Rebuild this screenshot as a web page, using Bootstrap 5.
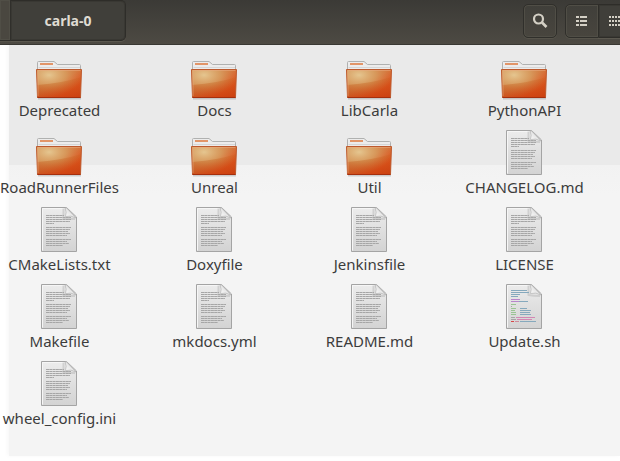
<!DOCTYPE html>
<html lang="en">
<head>
<meta charset="utf-8">
<meta name="viewport" content="width=device-width, initial-scale=1">
<title>carla-0</title>
<link href="https://cdn.jsdelivr.net/npm/bootstrap@5.3.0/dist/css/bootstrap.min.css" rel="stylesheet">
<style>
body { background: #fff; color: #3c3c3c; font: 15px/20px "Noto Sans", "Open Sans", sans-serif; overflow-x: hidden; }
.toolbar { height: 45px; background: linear-gradient(#3b3a36, #4d4a43); border-bottom: 1px solid #393833; overflow: hidden; }
.tool { border: 1px solid #302f2b; border-radius: 5px; background: linear-gradient(#403f3a, #48453e); box-shadow: inset 0 0 0 1px #504e46, 0 1px 0 #56534a; color: #d4d0c5; padding: 0; }
.tool:hover, .tool.active:hover { color: #fff; border-color: #302f2b; background: #4a4740; }
.tool.active { background: #403f3a; border-color: #2e2d29; box-shadow: inset 0 0 0 1px #393833, 0 1px 0 #5b584f; color: #d4d0c5; }
.square { width: 34px; height: 34px; }
.tool svg { display: block; margin: auto; }
.parent { width: 11px; height: 41px; border-left: 0; border-top: 0; border-radius: 0; }
.crumb, .tool.active.crumb { width: 115px; height: 41px; border-radius: 0 5px 5px 0; border-left: 0; color: #dfdbd2; font-size: 14px; font-weight: 700; }
.views { margin-right: -12px; }
.pane { margin: 0 0 4px 9px; background: linear-gradient(#eaeaea 120px, #f2f2f2 120px, #f4f4f4 150px); box-shadow: -2px 0 4px #f8f8f8; }
.files { margin: 0 18px 0 -27px; padding: 8px 0 28px; row-gap: 10px; }
.item { color: inherit; }
.item svg { width: 48px; height: 47px; display: block; margin: 0 auto; }
.item span { display: block; white-space: nowrap; }
</style>
<script defer src="https://cdn.jsdelivr.net/npm/bootstrap@5.3.0/dist/js/bootstrap.bundle.min.js"></script>
</head>
<body>
<svg width="0" height="0" class="position-absolute" aria-hidden="true">
  <defs>
    <linearGradient id="gFolder" x1="0" y1="0" x2="1" y2="1"><stop offset="0" stop-color="#d39a63"/><stop offset=".45" stop-color="#d27a3f"/><stop offset=".75" stop-color="#e04c1a"/><stop offset="1" stop-color="#d03f12"/></linearGradient>
    <radialGradient id="gGlow" cx=".28" cy=".2" r=".75"><stop offset="0" stop-color="#e5c690"/><stop offset=".5" stop-color="#d9a163" stop-opacity=".75"/><stop offset="1" stop-color="#dc7a45" stop-opacity="0"/></radialGradient>
    <linearGradient id="gShade" x1="0" y1="0" x2="0" y2="1"><stop offset="0" stop-color="#c2651b" stop-opacity=".2"/><stop offset="1" stop-color="#c8400f" stop-opacity=".6"/></linearGradient>
    <linearGradient id="gPaper" x1="0" y1="0" x2="0" y2="1"><stop offset="0" stop-color="#ececec"/><stop offset="1" stop-color="#d3d3d3"/></linearGradient>
    <linearGradient id="gFold" x1="0" y1="1" x2="1" y2="0"><stop offset="0" stop-color="#fff"/><stop offset=".5" stop-color="#e6e6e6"/><stop offset="1" stop-color="#b5b5b5"/></linearGradient>
  </defs>
  <symbol id="folder" viewBox="0 0 48 47">
    <path d="M2 45.500H45" stroke="#000" stroke-opacity=".16" stroke-width="2"/>
    <path d="M1.500 17V9.500Q1.500 8.500 2.500 8.500H18L21.500 11.500H43.500Q44.500 11.500 44.500 12.500V17Z" fill="#ececec" stroke="#b0b1b0"/>
    <path d="M2.500 14.500H44" stroke="#d6d6d6"/>
    <path d="M4 11H17" stroke="#e29568" stroke-width="2"/>
    <path d="M.500 16.500H45.500L44.500 44.500H1.500Z" fill="url(#gFolder)"/>
    <path d="M.500 16.500H45.500L44.500 44.500H1.500Z" fill="url(#gGlow)"/>
    <path d="M1 32Q27 30 45 24L44.500 44.500H1.500Z" fill="url(#gShade)"/>
    <path d="M.500 16.500H45.500L44.500 44.500H1.500Z" fill="none" stroke="#bd5a2e"/>
    <path d="M2 17.500H44.500M2 18V43" fill="none" stroke="#e9a97e" stroke-opacity=".55"/>
    <path d="M1.500 44.500H44.500" stroke="#a52f0d"/>
  </symbol>
  <symbol id="paper" viewBox="0 0 48 47">
    <path d="M5.500 .500H30.500L40.500 10V44.500H5.500Z" fill="url(#gPaper)" stroke="#a4a4a4"/>
    <path d="M6.500 43.500V1.500H29" fill="none" stroke="#f6f6f6"/>
    <path d="M27.500 1.500V11Q33 12 39 12" fill="none" stroke="#aaa" stroke-opacity=".4" stroke-width="2"/>
    <path d="M29 1Q31 5 29.500 9.500Q35 8 40 11L30.500 .800Z" fill="url(#gFold)" stroke="#b2b2b2" stroke-width=".7"/>
  </symbol>
  <symbol id="text" viewBox="0 0 48 47">
    <use href="#paper" width="48" height="47"/>
    <path stroke="#a6a6a6" fill="none" d="M10 8.500H28M10 10.500H35M10 12.500H35M10 14.500H34M10 16.500H18M10 20.500H35M10 22.500H34M10 24.500H32M10 26.500H34M10 28.500H31M10 32.500H35M10 34.500H31M10 36.500H33M10 38.500H27" stroke-dasharray="3 .3"/>
  </symbol>
  <symbol id="script" viewBox="0 0 48 47">
    <use href="#paper" width="48" height="47"/>
    <g fill="none">
      <path d="M10 6.500H26M10 8.500H28M10 10.500H19M10 12.500H17M18 17.500H27M19 24.500H26M19 26.500H30M19 28.500H29M19 30.500H30M19 37.500H35" stroke="#86a9bd"/>
      <path d="M10 15.500H19M10 17.500H18" stroke="#b985cb"/>
      <path d="M10 20.500H15M10 24.500H15M10 26.500H14M10 28.500H15M10 30.500H15" stroke="#9ac493"/>
      <path d="M15 33.500H34M16 35.500H31" stroke="#d387b3"/>
      <path d="M10 22.500H11M10 33.500H14M10 35.500H15" stroke="#a5a5a5"/>
      <path d="M10 37.500H13" stroke="#d74747"/><path d="M14 37.500H18" stroke="#cf8b9b"/>
    </g>
  </symbol>
</svg>

<header class="toolbar d-flex align-items-start position-relative z-1">
  <button type="button" class="btn tool parent" aria-label="Parent folder"></button>
  <button type="button" class="btn tool active crumb">carla-0</button>
  <button type="button" class="btn tool square ms-auto me-2 mt-1" aria-label="Search">
    <svg width="16" height="16" viewBox="0 0 16 16" fill="none" stroke="currentColor"><circle cx="6.500" cy="6" r="4.500" stroke-width="2.200"/><path d="M10 9.500L14.500 14" stroke-width="2.600"/></svg>
  </button>
  <div class="btn-group views mt-1">
    <button type="button" class="btn tool square" aria-label="List view">
      <svg width="12" height="12" viewBox="0 0 12 12" fill="currentColor" shape-rendering="crispEdges"><path d="M0 1h3v2H0zM4 1h7v2H4zM0 5h3v2H0zM4 5h7v2H4zM0 9h3v2H0zM4 9h7v2H4z"/></svg>
    </button>
    <button type="button" class="btn tool active square" aria-label="Icon view">
      <svg width="12" height="12" viewBox="0 0 12 12" fill="currentColor" shape-rendering="crispEdges"><path d="M0 1h2v2H0zM3 1h2v2H3zM6 1h2v2H6zM9 1h2v2H9zM0 5h2v2H0zM3 5h2v2H3zM6 5h2v2H6zM9 5h2v2H9zM0 9h2v2H0zM3 9h2v2H3zM6 9h2v2H6zM9 9h2v2H9z"/></svg>
    </button>
  </div>
</header>

<main class="pane">
  <div class="files row row-cols-4 g-0 text-center">
    <a href="#" class="item col text-decoration-none"><svg><use href="#folder"/></svg><span>Deprecated</span></a>
    <a href="#" class="item col text-decoration-none"><svg><use href="#folder"/></svg><span>Docs</span></a>
    <a href="#" class="item col text-decoration-none"><svg><use href="#folder"/></svg><span>LibCarla</span></a>
    <a href="#" class="item col text-decoration-none"><svg><use href="#folder"/></svg><span>PythonAPI</span></a>
    <a href="#" class="item col text-decoration-none"><svg><use href="#folder"/></svg><span>RoadRunnerFiles</span></a>
    <a href="#" class="item col text-decoration-none"><svg><use href="#folder"/></svg><span>Unreal</span></a>
    <a href="#" class="item col text-decoration-none"><svg><use href="#folder"/></svg><span>Util</span></a>
    <a href="#" class="item col text-decoration-none"><svg><use href="#text"/></svg><span>CHANGELOG.md</span></a>
    <a href="#" class="item col text-decoration-none"><svg><use href="#text"/></svg><span>CMakeLists.txt</span></a>
    <a href="#" class="item col text-decoration-none"><svg><use href="#text"/></svg><span>Doxyfile</span></a>
    <a href="#" class="item col text-decoration-none"><svg><use href="#text"/></svg><span>Jenkinsfile</span></a>
    <a href="#" class="item col text-decoration-none"><svg><use href="#text"/></svg><span>LICENSE</span></a>
    <a href="#" class="item col text-decoration-none"><svg><use href="#text"/></svg><span>Makefile</span></a>
    <a href="#" class="item col text-decoration-none"><svg><use href="#text"/></svg><span>mkdocs.yml</span></a>
    <a href="#" class="item col text-decoration-none"><svg><use href="#text"/></svg><span>README.md</span></a>
    <a href="#" class="item col text-decoration-none"><svg><use href="#script"/></svg><span>Update.sh</span></a>
    <a href="#" class="item col text-decoration-none"><svg><use href="#text"/></svg><span>wheel_config.ini</span></a>
  </div>
</main>
</body>
</html>
